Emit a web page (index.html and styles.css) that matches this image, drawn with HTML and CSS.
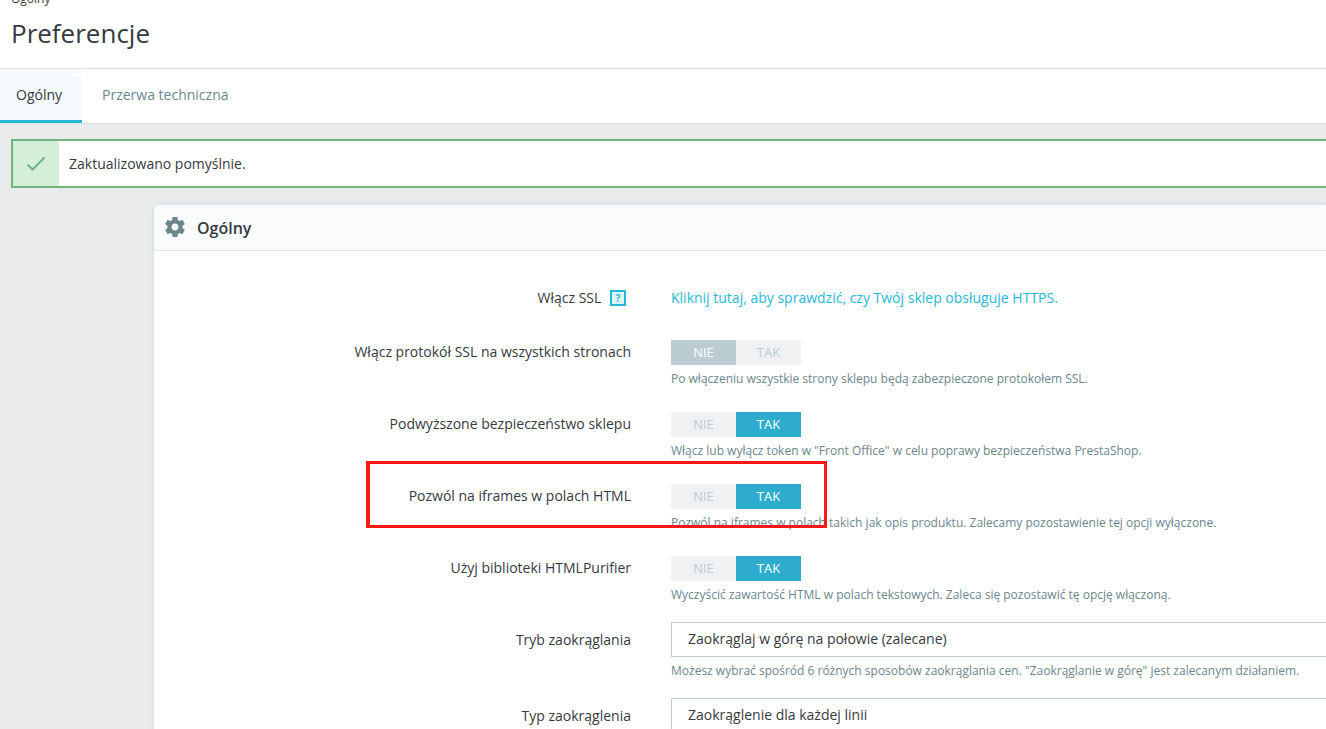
FILE: index.html
```html
<!doctype html>
<html lang="pl">
<head>
    <meta charset="utf-8">
    <meta name="viewport" content="width=device-width, initial-scale=1">
    <title>Preferencje</title>
    <link rel="stylesheet" href="styles.css">
</head>
<body>
    <header class="page-header">
        <div class="breadcrumb">Ogólny</div>
        <h1 class="page-title">Preferencje</h1>
    </header>
    <nav class="tabs">
        <a class="tab active" href="#general">Ogólny</a>
        <a class="tab" href="#maintenance">Przerwa techniczna</a>
    </nav>

    <main>
        <div class="alert" role="alert">
            <div class="alert-icon">
                <svg width="20" height="16" viewBox="0 0 20 16"><path d="M1.5 8.5 L6.5 13.5 L18.5 1.5" fill="none" stroke="#70b580" stroke-width="2"/></svg>
            </div>
            <p class="alert-text">Zaktualizowano pomyślnie.</p>
        </div>

        <form class="card" id="general">
            <h2 class="card-header">
                <svg width="24" height="24" viewBox="0 0 24 24"><path fill="#6c868e" transform="translate(0 -1)" d="M19.43 12.98c.04-.32.07-.64.07-.98s-.03-.66-.07-.98l2.11-1.65c.19-.15.24-.42.12-.64l-2-3.46c-.12-.22-.39-.3-.61-.22l-2.49 1c-.52-.4-1.08-.73-1.69-.98l-.38-2.65C14.46 2.18 14.25 2 14 2h-4c-.25 0-.46.18-.49.42l-.38 2.65c-.61.25-1.17.59-1.69.98l-2.49-1c-.23-.09-.49 0-.61.22l-2 3.46c-.13.22-.07.49.12.64l2.11 1.65c-.04.32-.07.65-.07.98s.03.66.07.98l-2.11 1.65c-.19.15-.24.42-.12.64l2 3.46c.12.22.39.3.61.22l2.49-1c.52.4 1.08.73 1.69.98l.38 2.65c.03.24.24.42.49.42h4c.25 0 .46-.18.49-.42l.38-2.65c.61-.25 1.17-.59 1.69-.98l2.49 1c.23.09.49 0 .61-.22l2-3.46c.12-.22.07-.49-.12-.64l-2.11-1.65zM12 15.5c-1.93 0-3.5-1.57-3.5-3.5s1.57-3.5 3.5-3.5 3.5 1.57 3.5 3.5-1.57 3.5-3.5 3.5z"/></svg>
                Ogólny
            </h2>
            <div class="card-body">
                <div class="row">
                    <div class="label">Włącz SSL <button class="help-box" type="button">?</button></div>
                    <div class="field"><a class="check-link" href="#ssl">Kliknij tutaj, aby sprawdzić, czy Twój sklep obsługuje HTTPS.</a></div>
                </div>
                <div class="row">
                    <div class="label" id="l-ssl">Włącz protokół SSL na wszystkich stronach</div>
                    <div class="field">
                        <div class="switch disabled" role="radiogroup" aria-labelledby="l-ssl">
                            <input type="radio" name="ssl" id="ssl0" checked disabled><label for="ssl0">NIE</label>
                            <input type="radio" name="ssl" id="ssl1" disabled><label for="ssl1">TAK</label>
                        </div>
                        <p class="hint">Po włączeniu wszystkie strony sklepu będą zabezpieczone protokołem SSL.</p>
                    </div>
                </div>
                <div class="row">
                    <div class="label" id="l-token">Podwyższone bezpieczeństwo sklepu</div>
                    <div class="field">
                        <div class="switch" role="radiogroup" aria-labelledby="l-token">
                            <input type="radio" name="token" id="token0"><label for="token0">NIE</label>
                            <input type="radio" name="token" id="token1" checked><label for="token1">TAK</label>
                        </div>
                        <p class="hint">Włącz lub wyłącz token w "Front Office" w celu poprawy bezpieczeństwa PrestaShop.</p>
                    </div>
                </div>
                <div class="row highlighted">
                    <div class="label" id="l-iframe">Pozwól na iframes w polach HTML</div>
                    <div class="field">
                        <div class="switch" role="radiogroup" aria-labelledby="l-iframe">
                            <input type="radio" name="iframe" id="iframe0"><label for="iframe0">NIE</label>
                            <input type="radio" name="iframe" id="iframe1" checked><label for="iframe1">TAK</label>
                        </div>
                        <p class="hint">Pozwól na iframes w polach takich jak opis produktu. Zalecamy pozostawienie tej opcji wyłączone.</p>
                    </div>
                </div>
                <div class="row">
                    <div class="label" id="l-purifier">Użyj biblioteki HTMLPurifier</div>
                    <div class="field">
                        <div class="switch" role="radiogroup" aria-labelledby="l-purifier">
                            <input type="radio" name="purifier" id="purifier0"><label for="purifier0">NIE</label>
                            <input type="radio" name="purifier" id="purifier1" checked><label for="purifier1">TAK</label>
                        </div>
                        <p class="hint">Wyczyścić zawartość HTML w polach tekstowych. Zaleca się pozostawić tę opcję włączoną.</p>
                    </div>
                </div>
                <div class="row">
                    <label class="label" for="round-mode">Tryb zaokrąglania</label>
                    <div class="field">
                        <select class="select" id="round-mode">
                            <option>Zaokrąglaj w górę na połowie (zalecane)</option>
                        </select>
                        <p class="hint">Możesz wybrać spośród 6 różnych sposobów zaokrąglania cen. "Zaokrąglanie w górę" jest zalecanym działaniem.</p>
                    </div>
                </div>
                <div class="row">
                    <label class="label" for="round-type">Typ zaokrąglenia</label>
                    <div class="field">
                        <select class="select" id="round-type">
                            <option>Zaokrąglenie dla każdej linii</option>
                        </select>
                    </div>
                </div>
            </div>
        </form>
    </main>
</body>
</html>
```
FILE: styles.css
```css
*, *::before, *::after {
    box-sizing: border-box;
}
body {
    margin: 0;
    height: 100vh;
    overflow: hidden;
    background-color: #eaebec;
    color: #363a41;
    font-family: "Open Sans", sans-serif;
    font-size: 14px;
    line-height: 20px;
}
h1, h2, p {
    margin: 0;
}
a {
    text-decoration: none;
}
.page-header {
    margin-top: -10px;
    padding: 0 11px 17px;
    background-color: #fff;
    border-bottom: 1px solid #dfdfdf;
}
.breadcrumb {
    font-size: 12px;
    line-height: 18px;
}
.page-title {
    padding-top: 7px;
    font-size: 26px;
    font-weight: 400;
    line-height: 36px;
}

/* tabs */
.tabs {
    display: flex;
    background-color: #fff;
    border-bottom: 1px solid #dfdfdf;
}
.tab {
    position: relative;
    padding: 16px 20px 15px;
    border-bottom: 3px solid transparent;
    color: #6c868e;
}
.tab.active {
    padding-left: 16px;
    background-color: #f4f9fb;
    border-bottom-color: #25b9d7;
    color: #363a41;
}
.tab.active::after {
    content: "";
    position: absolute;
    top: 4px;
    right: 0;
    width: 10px;
    height: 4px;
    border-radius: 2px 0 0 2px;
    background-color: #fff;
}

/* success message */
.alert {
    display: flex;
    margin: 15px 0 17px 11px;
    background-color: #fff;
    border: 2px solid #70b580;
    border-right: 0;
}
.alert-icon {
    display: flex;
    align-items: center;
    justify-content: center;
    width: 46px;
    background-color: #d4eed7;
}
.alert-text {
    padding: 13px 10px 12px;
}

/* settings card */
.card {
    margin-left: 154px;
    background-color: #fff;
    border-radius: 5px 0 0 0;
    box-shadow: 0 0 4px #c8d7db;
}
.card-header {
    display: flex;
    align-items: center;
    gap: 10px;
    height: 46px;
    padding: 0 9px;
    background-color: #fafbfc;
    border-bottom: 1px solid #dbe6e9;
    border-radius: 5px 0 0 0;
    font-size: 16px;
    font-weight: 600;
}
.card-body {
    display: flex;
    flex-direction: column;
    gap: 18px;
    padding: 29px 0 20px;
}
.row {
    position: relative;
    display: flex;
    gap: 40px;
    min-height: 36px;
}
.label {
    flex: 0 0 477px;
    padding-top: 8px;
    text-align: right;
}
.field {
    flex: 1;
}
.help-box {
    width: 16px;
    height: 16px;
    margin: 0 5px;
    padding: 0;
    border: 2px solid #25b9d7;
    background-color: #def4f9;
    color: #25b9d7;
    font: 700 10px/12px "Open Sans", sans-serif;
    vertical-align: 1px;
}
.check-link {
    display: block;
    padding-top: 8px;
    color: #25b9d7;
}
.switch {
    display: flex;
    width: 130px;
    margin: 6px 0 4px;
    background-color: #eff1f2;
}
.switch input {
    position: absolute;
    opacity: 0;
}
.switch label {
    flex: 1;
    color: #bbcdd2;
    font-size: 13px;
    line-height: 25px;
    text-align: center;
}
.switch input:checked + label {
    background-color: #2eacce;
    color: #fff;
}
.switch.disabled input:checked + label {
    background-color: #bbcdd2;
}
.hint {
    color: #6c868e;
    font-size: 12px;
    line-height: 19px;
}
.select {
    display: block;
    width: 100%;
    height: 35px;
    margin-bottom: 4px;
    padding: 0 16px 2px;
    appearance: none;
    background-color: #fff;
    border: 1px solid #bbcdd2;
    border-right: 0;
    border-radius: 0;
    color: #363a41;
    font: 14px "Open Sans", sans-serif;
}

/* red frame around the iframe option */
.highlighted::after {
    content: "";
    position: absolute;
    top: -17px;
    left: 212px;
    width: 461px;
    height: 67px;
    border: 3px solid #ff1616;
    border-left-width: 4px;
    pointer-events: none;
}
```
